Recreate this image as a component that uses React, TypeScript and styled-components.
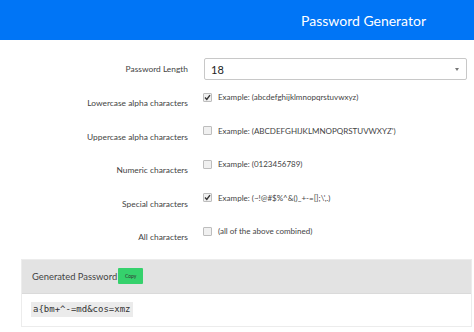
import styled, { createGlobalStyle } from 'styled-components'

const GlobalStyle = createGlobalStyle`
  html, body {
    margin: 0;
    padding: 0;
    background: #fff;
    font-family: Lato, "Open Sans", sans-serif;
    color: #333;
  }
`

const Header = styled.header`
  height: 40px;
  background: #0075f6;
  display: flex;
  align-items: center;
  justify-content: flex-end;
  padding-right: 48px;
`

const Titulo = styled.h1`
  margin: 0;
  color: #fff;
  font-size: 14px;
  font-weight: 400;
`

const Formulario = styled.form`
  display: grid;
  grid-template-columns: 188px 1fr;
  column-gap: 16px;
  padding: 18px 7px 0 0;
`

const Rotulo = styled.label<{ $topo: number }>`
  text-align: right;
  font-size: 8.4px;
  color: #444;
  padding-top: ${p => p.$topo}px;
  line-height: 12px;
`

const Campo = styled.div<{ $altura: number }>`
  height: ${p => p.$altura}px;
  display: flex;
  align-items: flex-start;
`

const Selecao = styled.div`
  flex: 1;
  height: 22px;
  box-sizing: border-box;
  border: 1px solid #c8c8c8;
  border-radius: 2px;
  display: flex;
  align-items: center;
  justify-content: space-between;
  padding: 0 6px 0 6px;
  font-size: 11px;
  color: #222;
`

const Seta = styled.span`
  width: 0;
  height: 0;
  border-left: 2.5px solid transparent;
  border-right: 2.5px solid transparent;
  border-top: 3px solid #777;
  margin-right: 1px;
`

const Opcao = styled.div`
  display: flex;
  align-items: center;
  gap: 6px;
  font-size: 8px;
  color: #444;
  margin-top: 3px;
  line-height: 12px;
`

const Caixa = styled.span`
  width: 7px;
  height: 7px;
  border: 1px solid #bdbdbd;
  border-radius: 1px;
  background: #f0f0f0;
  display: flex;
  align-items: center;
  justify-content: center;
  margin-left: -1px;
`

const Cartao = styled.section`
  margin: 3px 2px 0 21px;
  border: 1px solid #ececec;
`

const CabecalhoCartao = styled.div`
  height: 34px;
  background: #e3e3e3;
  display: flex;
  align-items: center;
  padding-left: 10px;
  border-bottom: 1px solid #dadada;
  box-sizing: border-box;
`

const TituloCartao = styled.span`
  font-size: 9.4px;
  color: #444;
`

const BotaoCopiar = styled.button`
  background: #35d16c;
  border: 0;
  border-radius: 1px;
  font-family: Lato, sans-serif;
  font-size: 5px;
  color: #333;
  width: 25px;
  height: 16px;
  padding: 0;
  margin-left: 1px;
`

const CorpoCartao = styled.div`
  display: flex;
  padding: 8px 9px 9px 9px;
`

const Codigo = styled.code`
  display: block;
  background: #ebebeb;
  font-family: "DejaVu Sans Mono", "Liberation Mono", monospace;
  font-size: 9px;
  line-height: 15px;
  padding: 0 2px;
  color: #333;
`

const Check = () => (
  <svg width="7" height="7" viewBox="0 0 7 7">
    <path d="M1 3.6 L2.8 5.4 L6 1.2" stroke="#333" strokeWidth="1.4" fill="none" />
  </svg>
)

const opcoes = [
  { rotulo: 'Lowercase alpha characters', texto: 'Example: (abcdefghijklmnopqrstuvwxyz)', marcado: true },
  { rotulo: 'Uppercase alpha characters', texto: "Example: (ABCDEFGHIJKLMNOPQRSTUVWXYZ')", marcado: false },
  { rotulo: 'Numeric characters', texto: 'Example: (0123456789)', marcado: false },
  { rotulo: 'Special characters', texto: "Example: (~!@#$%^&()_+-=[];\\',.)", marcado: true },
  { rotulo: 'All characters', texto: '(all of the above combined)', marcado: false },
]

const App = () => {
  return (
    <>
      <GlobalStyle />
      <Header>
        <Titulo>Password Generator</Titulo>
      </Header>

      <Formulario>
        <Rotulo $topo={5}>Password Length</Rotulo>
        <Campo $altura={30}>
          <Selecao>
            18
            <Seta />
          </Selecao>
        </Campo>

        {opcoes.map(o => (
          <>
            <Rotulo key={o.rotulo} $topo={9}>{o.rotulo}</Rotulo>
            <Campo key={o.texto} $altura={33.5}>
              <Opcao>
                <Caixa>{o.marcado && <Check />}</Caixa>
                {o.texto}
              </Opcao>
            </Campo>
          </>
        ))}
      </Formulario>

      <Cartao>
        <CabecalhoCartao>
          <TituloCartao>Generated Password</TituloCartao>
          <BotaoCopiar>Copy</BotaoCopiar>
        </CabecalhoCartao>
        <CorpoCartao>
          <Codigo>a{'{'}bm+^-=md&amp;cos=xmz</Codigo>
        </CorpoCartao>
      </Cartao>
    </>
  )
}

export default App
